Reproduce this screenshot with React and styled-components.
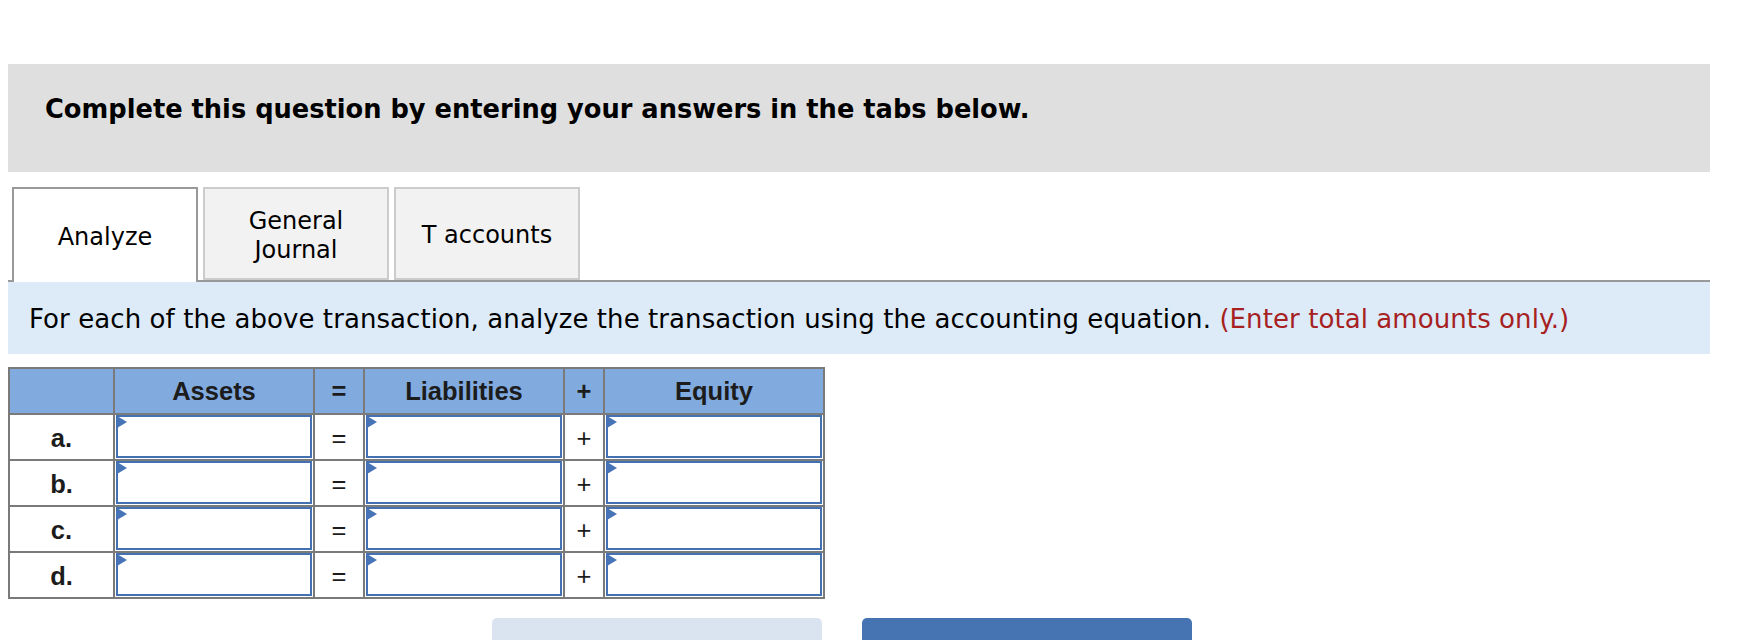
import React from 'react';
import styled, { createGlobalStyle } from 'styled-components';

const GlobalStyle = createGlobalStyle`
    html, body {
        margin: 0;
        padding: 0;
        background: #fff;
        overflow: hidden;
    }
    body {
        padding: 8px;
        font-family: "DejaVu Sans", Verdana, sans-serif;
        color: #000;
    }
`;

const Page = styled.div`
    width: 1702px;
    padding-top: 56px;
`;

const Instructions = styled.div`
    background: #dfdfdf;
    height: 108px;
    padding: 0 37px 19px;
    display: flex;
    align-items: center;
    box-sizing: border-box;
    h2 {
        margin: 0;
        font-size: 25.7px;
        font-weight: bold;
    }
`;

const TabBar = styled.div`
    display: flex;
    gap: 5px;
    margin-top: 15px;
    padding-left: 4px;
    border-bottom: 2px solid #999;
    height: 93px;
`;

const Tab = styled.div`
    width: 186px;
    box-sizing: border-box;
    display: flex;
    align-items: center;
    justify-content: center;
    text-align: center;
    font-size: 24px;
    line-height: 29px;
    padding-top: 4px;
    background: ${props => (props.active ? '#fff' : '#f2f2f2')};
    border: 2px solid ${props => (props.active ? '#999' : '#ccc')};
    border-bottom: ${props => (props.active ? 'none' : '2px solid #ccc')};
    height: ${props => (props.active ? '95px' : '93px')};
    position: relative;
    z-index: 1;
`;

const Prompt = styled.div`
    background: #ddebf8;
    height: 72px;
    padding: 1px 0 0 21px;
    box-sizing: border-box;
    display: flex;
    align-items: center;
    font-size: 26px;
    letter-spacing: 0.08px;
`;

const Note = styled.span`
    color: #a6211f;
`;

const Grid = styled.div`
    margin-top: 13px;
    display: grid;
    grid-template-columns: 103px 198px 48px 198px 38px 218px;
    grid-auto-rows: 44px;
    gap: 2px;
    padding: 2px;
    width: max-content;
    background: #7a7a7a;
    font-family: "Liberation Sans", Arial, sans-serif;
`;

const Head = styled.div`
    background: #81aadf;
    color: #1c1c1c;
    font-weight: bold;
    font-size: 25.5px;
    display: flex;
    align-items: center;
    justify-content: center;
`;

const Cell = styled.div`
    background: #fff;
    color: #1c1c1c;
    font-size: 25.5px;
    font-weight: ${props => (props.bold ? 'bold' : 'normal')};
    display: flex;
    align-items: center;
    justify-content: center;
    padding-top: 2px;
    box-sizing: border-box;
`;

const InputCell = styled.div`
    background: #fff;
    padding: 0 1px 1px 1px;
    box-sizing: border-box;
`;

const Input = styled.div`
    position: relative;
    height: 100%;
    box-sizing: border-box;
    border: 2px solid #4471b2;
    background: #fff;
    &::before {
        content: '';
        position: absolute;
        top: -1px;
        left: -1px;
        border-top: 6px solid transparent;
        border-bottom: 6px solid transparent;
        border-left: 10px solid #4774b6;
        height: 0;
        width: 0;
    }
`;

const Buttons = styled.div`
    display: flex;
    gap: 40px;
    margin-top: 19px;
    padding-left: 484px;
`;

const Button = styled.div`
    width: 330px;
    height: 48px;
    border-radius: 5px;
    background: ${props => (props.primary ? '#4674b2' : '#dae4f0')};
`;

const rows = ['a.', 'b.', 'c.', 'd.'];

export default function App() {
    return (
        <Page>
            <GlobalStyle />
            <Instructions>
                <h2>Complete this question by entering your answers in the tabs below.</h2>
            </Instructions>
            <TabBar>
                <Tab active>Analyze</Tab>
                <Tab>General<br />Journal</Tab>
                <Tab>T accounts</Tab>
            </TabBar>
            <Prompt>
                <span>
                    For each of the above transaction, analyze the transaction using the accounting equation.{' '}
                    <Note>(Enter total amounts only.)</Note>
                </span>
            </Prompt>
            <Grid>
                <Head />
                <Head>Assets</Head>
                <Head>=</Head>
                <Head>Liabilities</Head>
                <Head>+</Head>
                <Head>Equity</Head>
                {rows.map(r => (
                    <React.Fragment key={r}>
                        <Cell bold>{r}</Cell>
                        <InputCell><Input /></InputCell>
                        <Cell>=</Cell>
                        <InputCell><Input /></InputCell>
                        <Cell>+</Cell>
                        <InputCell><Input /></InputCell>
                    </React.Fragment>
                ))}
            </Grid>
            <Buttons>
                <Button />
                <Button primary />
            </Buttons>
        </Page>
    );
}
